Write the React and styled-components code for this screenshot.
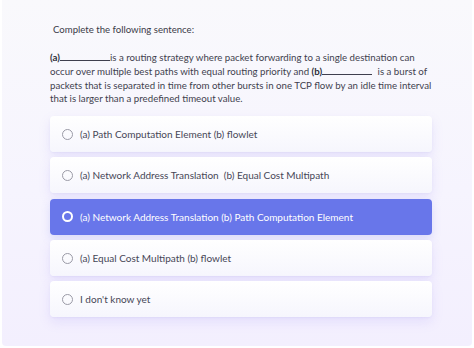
import React from "react";
import styled, { createGlobalStyle } from "styled-components";

const Global = createGlobalStyle`
  html, body { margin: 0; padding: 0; background: #ffffff; }
  body { font-family: "Lato", "Noto Sans", sans-serif; }
`;

const Panel = styled.div`
  box-sizing: border-box;
  margin: 0 2px;
  height: 346px;
  padding: 22px 30px 0 48px;
  background: linear-gradient(180deg, #f9f9fc 0%, #f6f4fe 55%, #f3effe 100%);
  border-radius: 0 0 4px 4px;
`;

const Prompt = styled.div`
  font-size: 9.6px;
  color: #3b3b48;
  padding-left: 3px;
  line-height: 16px;
`;

const Sentence = styled.p`
  margin: 13px 0 0;
  font-size: 9.7px;
  line-height: 13.8px;
  color: #3f3f4e;
  width: 388px;
`;

const Label = styled.b`
  font-weight: 700;
  color: #2e2e3a;
`;

const Blank = styled.span`
  display: inline-block;
  width: 50px;
  border-bottom: 1px solid #3f3f4e;
  margin-right: ${(p) => (p.$gap ? "3px" : "0")};
  vertical-align: baseline;
`;

const Options = styled.div`
  margin-top: 10px;
  display: flex;
  flex-direction: column;
  gap: 5.3px;
  width: 382px;
`;

const Option = styled.div`
  box-sizing: border-box;
  height: 36px;
  display: flex;
  align-items: center;
  gap: 7px;
  padding-left: 12px;
  border-radius: 4px;
  font-size: 10px;
  color: ${(p) => (p.$selected ? "#ffffff" : "#464656")};
  background: ${(p) =>
    p.$selected ? "#6876ea" : "linear-gradient(180deg, #ffffff 0%, #f6f6fd 100%)"};
  box-shadow: ${(p) =>
    p.$selected
      ? "0 4px 10px rgba(100,110,230,0.18)"
      : "0 5px 12px rgba(150,130,245,0.16), 0 1px 2px rgba(120,110,200,0.08)"};
`;

const Radio = styled.span`
  box-sizing: border-box;
  flex: none;
  width: 11px;
  height: 11px;
  border-radius: 50%;
  border: ${(p) => (p.$selected ? "2.2px solid #ffffff" : "1.2px solid #9a9aa6")};
  background: transparent;
`;

const OptionText = styled.span`
  white-space: pre;
`;

const options = [
  "(a) Path Computation Element (b) flowlet",
  "(a) Network Address Translation  (b) Equal Cost Multipath",
  "(a) Network Address Translation (b) Path Computation Element",
  "(a) Equal Cost Multipath (b) flowlet",
  "I don't know yet",
];

export default function App() {
  return (
    <>
      <Global />
      <Panel>
        <Prompt>Complete the following sentence:</Prompt>
        <Sentence>
          <Label>(a)</Label>
          <Blank />
          is a routing strategy where packet forwarding to a single destination can
          occur over multiple best paths with equal routing priority and <Label>(b)</Label>
          <Blank $gap /> is a burst of packets that is separated in time from other bursts
          in one TCP flow by an idle time interval that is larger than a predefined timeout
          value.
        </Sentence>
        <Options>
          {options.map((o, i) => (
            <Option key={i} $selected={i === 2}>
              <Radio $selected={i === 2} />
              <OptionText>{o}</OptionText>
            </Option>
          ))}
        </Options>
      </Panel>
    </>
  );
}
